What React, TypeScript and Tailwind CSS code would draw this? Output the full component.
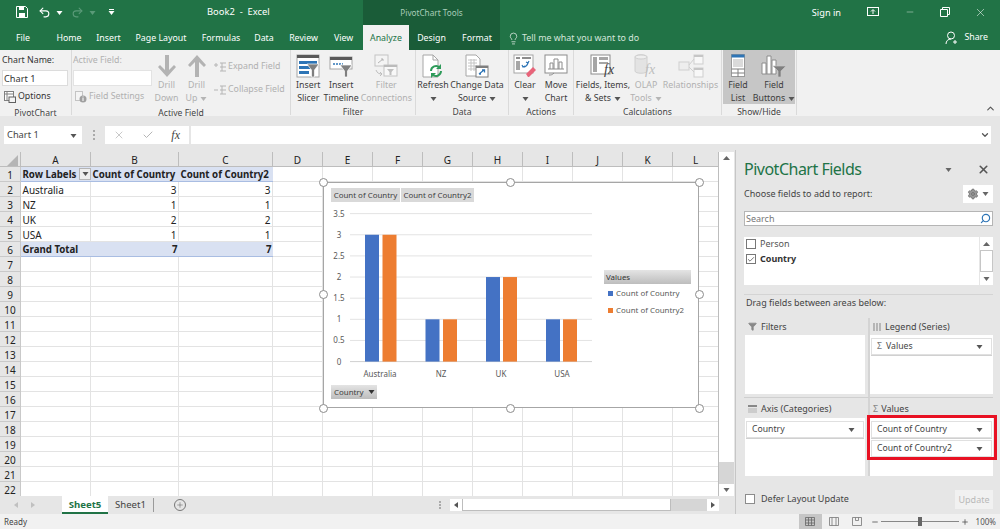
import React from "react";
import { Undo2, Redo2, X, Check, Lightbulb, ChevronUp, ChevronDown, Minus, Plus, Search, Settings, Filter } from "lucide-react";

const Caret = ({ c = "#555" }: { c?: string }) => (
  <svg width="7" height="4" viewBox="0 0 7 4" className="inline-block shrink-0"><path d="M0.5 0h6L3.5 4z" fill={c} /></svg>
);

const FxText = ({ x, y, c }: { x: number; y: number; c: string }) => (
  <text x={x} y={y} fontFamily="Liberation Serif, serif" fontStyle="italic" fontSize="14" fill={c}>fx</text>
);

const SlicerIcon = () => (
  <svg width="24" height="24" viewBox="0 0 24 24">
    <rect x="1" y="1" width="22" height="22" fill="#fff" stroke="#a6a6a6" />
    <rect x="1" y="1" width="22" height="3" fill="#595959" />
    <rect x="3" y="7" width="18" height="3" fill="#2e75b6" />
    <rect x="3" y="12" width="12" height="3" fill="#2e75b6" />
    <rect x="3" y="17" width="10" height="3" fill="#2e75b6" />
    <path d="M11 10h12l-4.5 6v7h-3v-7z" fill="#7f7f7f" stroke="#fff" strokeWidth=".7" />
  </svg>
);
const TimelineIcon = () => (
  <svg width="24" height="24" viewBox="0 0 24 24">
    <rect x="1" y="3" width="22" height="12" fill="#fff" stroke="#a6a6a6" />
    <rect x="1" y="3" width="22" height="3" fill="#595959" />
    <path d="M4 10h10" stroke="#2e75b6" strokeWidth="1.5" strokeDasharray="2 1" />
    <path d="M11 11h12l-4.5 6v6h-3v-6z" fill="#7f7f7f" stroke="#fff" strokeWidth=".7" />
  </svg>
);
const FilterConnIcon = () => (
  <svg width="24" height="24" viewBox="0 0 24 24">
    <rect x="1" y="1" width="13" height="11" fill="#f4f4f4" stroke="#c4c4c4" />
    <path d="M4 9l5-4M7 5h2v2" stroke="#b5b5b5" fill="none" />
    <rect x="10" y="11" width="13" height="11" fill="#f8f8f8" stroke="#c4c4c4" />
    <rect x="10" y="11" width="13" height="2" fill="#bbb" />
    <path d="M13 15h7l-2.5 3v3h-2v-3z" fill="#c0c0c0" />
    <path d="M2 16c1 3 3 4 6 4M6 18l2 2-2 2" stroke="#bdbdbd" fill="none" />
  </svg>
);
const RefreshIcon = () => (
  <svg width="26" height="24" viewBox="0 0 26 24">
    <path d="M3 1h10l5 5v17H3z" fill="#fff" stroke="#a6a6a6" />
    <path d="M13 1v5h5" fill="none" stroke="#a6a6a6" />
    <path d="M11 17a5 5 0 0 1 8.5-3.5M21 17a5 5 0 0 1-8.5 3.5" fill="none" stroke="#2e9b5a" strokeWidth="2" />
    <path d="M21 10v5h-5zM11 24v-5h5z" fill="#2e9b5a" />
  </svg>
);
const ChangeSourceIcon = () => (
  <svg width="26" height="24" viewBox="0 0 26 24">
    <path d="M2 1h10l4 4v17H2z" fill="#fff" stroke="#a6a6a6" />
    <path d="M4 6h9M4 9h9M4 12h9M4 15h9M7 5v12M10 5v12" stroke="#c4c4c4" />
    <rect x="12" y="12" width="12" height="11" fill="#fff" stroke="#7f7f7f" />
    <rect x="12" y="12" width="12" height="2" fill="#7f7f7f" />
    <path d="M15 20l5-4M18 16h2.500v2.500M15 20h2" stroke="#2e75b6" strokeWidth="1.300" fill="none" />
  </svg>
);
const ClearIcon = () => (
  <svg width="24" height="24" viewBox="0 0 24 24">
    <rect x="1" y="1" width="19" height="18" fill="#fff" stroke="#a6a6a6" />
    <rect x="3" y="3" width="4" height="2" fill="#8c8c8c" />
    <rect x="9" y="3" width="9" height="2" fill="#8c8c8c" />
    <rect x="3" y="7" width="4" height="9" fill="#a6a6a6" />
    <path d="M10 13c2 0 4-1 5-4M13 8l2 1 1-2M9 11l1 2 2-1" stroke="#2e75b6" strokeWidth="1.200" fill="none" />
    <path d="M13 20l7-7 3 3-7 7h-1z" fill="#e8647a" />
  </svg>
);
const MoveChartIcon = () => (
  <svg width="24" height="24" viewBox="0 0 24 24">
    <rect x="1" y="1" width="22" height="18" fill="#fff" stroke="#8c8c8c" />
    <path d="M6 15V9h3v6M10 15V5h4v10M15 15V8h3v7M4 15h16" fill="none" stroke="#8c8c8c" />
    <path d="M10 19c-2 2-3 2-5 2" stroke="#8c8c8c" fill="none" />
  </svg>
);
const FieldsIcon = () => (
  <svg width="26" height="24" viewBox="0 0 26 24" className="overflow-visible">
    <rect x="1" y="1" width="19" height="19" fill="#fff" stroke="#8c8c8c" />
    <rect x="3" y="3" width="4" height="15" fill="#a6a6a6" />
    <rect x="9" y="3" width="9" height="3" fill="#a6a6a6" />
    <rect x="9" y="8" width="9" height="2" fill="#a6a6a6" />
    <FxText x={14} y={20} c="#404040" />
  </svg>
);
const OlapIcon = () => (
  <svg width="24" height="24" viewBox="0 0 24 24" className="overflow-visible">
    <path d="M1 3c0-3 12-3 12 0v14c0 3-12 3-12 0z" fill="#e3e3e3" stroke="#d0d0d0" />
    <ellipse cx="7" cy="3" rx="6" ry="2" fill="#efefef" stroke="#cfcfcf" />
    <FxText x={11} y={20} c="#bdbdbd" />
  </svg>
);
const RelIcon = () => (
  <svg width="26" height="24" viewBox="0 0 26 24">
    <rect x="1" y="8" width="10" height="8" fill="#eee" stroke="#d0d0d0" />
    <rect x="16" y="1" width="9" height="9" fill="#f8f8f8" stroke="#cfcfcf" />
    <rect x="16" y="1" width="9" height="2" fill="#c6c6c6" />
    <rect x="16" y="14" width="9" height="9" fill="#f8f8f8" stroke="#cfcfcf" />
    <rect x="16" y="14" width="9" height="2" fill="#c6c6c6" />
    <path d="M11 11l5-6M11 13l5 5" stroke="#cfcfcf" />
  </svg>
);
const FieldListIcon = () => (
  <svg width="14" height="24" viewBox="0 0 14 24">
    <rect x=".5" y=".5" width="13" height="22" fill="#fff" stroke="#9a9a9a" />
    <rect x=".5" y=".5" width="13" height="3" fill="#2e75b6" />
    <path d="M2 6h10M2 8h10M2 10h10M2 12h10" stroke="#b5b5b5" />
    <path d="M.5 15h13M.5 19h13M7 15v8" stroke="#808080" />
  </svg>
);
const FieldButtonsIcon = () => (
  <svg width="26" height="24" viewBox="0 0 26 24">
    <path d="M1 20v-11h4v11M6 20V2h4v18M11 20V6h4v14" fill="#fff" stroke="#8c8c8c" />
    <path d="M1 20h14" stroke="#8c8c8c" />
    <path d="M12 12h13l-5 5v6h-3v-6z" fill="#7f7f7f" stroke="#c6c6c6" strokeWidth=".7" />
  </svg>
);
const DrillArrow = ({ up }: { up?: boolean }) => (
  <svg width="20" height="22" viewBox="0 0 20 22">
    <path d={up ? "M10 0L19 10l-2 2-5-5v15H8V7l-5 5-2-2z" : "M10 22L1 12l2-2 5 5V0h4v15l5-5 2 2z"} fill="#b3b3b3" />
  </svg>
);

const RBtn = ({ w, icon, l1, l2, caret, dim, bg }: { w: number; icon?: React.ReactNode; l1: string; l2?: string; caret?: boolean; dim?: boolean; bg?: boolean }) => (
  <div className={`flex flex-col items-center pt-[2px] h-[54px] whitespace-nowrap ${dim ? "text-[#b0b0b0]" : "text-[#3c3c3c]"} ${bg ? "bg-[#c6c6c6]" : ""}`} style={{ width: w }}>
    <div className="h-[27px] flex items-center justify-center shrink-0">{icon}</div>
    <div className="leading-[13px] h-[13px] shrink-0">{l1}</div>
    <div className="leading-[13px] h-[13px] flex items-center gap-[3px] shrink-0">{l2}{caret && <Caret c={dim ? "#b5b5b5" : "#555"} />}</div>
  </div>
);

const Group = ({ w, label, children }: { w: number; label: string; children: React.ReactNode }) => (
  <div className="flex flex-col border-r border-[#dadada] shrink-0 h-[65px]" style={{ width: w }}>
    <div className="flex h-[55px]">{children}</div>
    <div className="text-center text-[8.6px] leading-[11px] text-[#444] pt-[3px]">{label}</div>
  </div>
);

const tabs: [string, number][] = [["File", 46], ["Home", 46], ["Insert", 33], ["Page Layout", 72], ["Formulas", 48], ["Data", 38], ["Review", 41], ["View", 39]];

const cols = ["A", "B", "C", "D", "E", "F", "G", "H", "I", "J", "K", "L"];
const rowsData: Record<number, [string, string, string]> = {
  1: ["Row Labels", "Count of Country", "Count of Country2"],
  2: ["Australia", "3", "3"],
  3: ["NZ", "1", "1"],
  4: ["UK", "2", "2"],
  5: ["USA", "1", "1"],
  6: ["Grand Total", "7", "7"],
};

const Handle = ({ cls }: { cls: string }) => (
  <div className={`absolute w-[9px] h-[9px] rounded-full bg-white border-[1.5px] border-[#8c8c8c] ${cls}`} />
);

const bars = [
  { x: 365, o: 382.5, v: 3 },
  { x: 425.5, o: 443, v: 1 },
  { x: 486, o: 503, v: 2 },
  { x: 546, o: 563, v: 1 },
];
const yTicks = ["0", "0.5", "1", "1.5", "2", "2.5", "3", "3.5"];
const cats: [string, number][] = [["Australia", 380], ["NZ", 441], ["UK", 501], ["USA", 562]];

const PlotSvg = () => (
  <svg width="272" height="178" viewBox="325 205 272 178" className="shrink-0" fontFamily="Noto Sans, sans-serif">
    {yTicks.map((t, i) => {
      const y = 361.6 - i * 21.14;
      return (
        <g key={t}>
          <line x1="350" x2="592" y1={y} y2={y} stroke={i === 0 ? "#d0d0d0" : "#e3e3e3"} strokeWidth="1" />
          <text x="339" y={y + 3} fontSize="8" fill="#595959" textAnchor="middle">{t}</text>
        </g>
      );
    })}
    {bars.map((b) => (
      <g key={b.x}>
        <rect x={b.x} y={361.6 - b.v * 42.28} width="14" height={b.v * 42.28} fill="#4472c4" />
        <rect x={b.o} y={361.6 - b.v * 42.28} width="14" height={b.v * 42.28} fill="#ed7d31" />
      </g>
    ))}
    {cats.map(([c, x]) => (
      <text key={c} x={x} y="377" fontSize="8" fill="#595959" textAnchor="middle">{c}</text>
    ))}
  </svg>
);

const Chart = () => (
  <div className="absolute left-[323px] top-[30px] w-[376px] h-[226px] bg-white border-[1.5px] border-[#a6a6a6] text-[7.9px] text-[#404040]">
    <div className="pl-[7px] pt-[5px] flex gap-[1px] h-[22px]">
      <div className="h-[14px] w-[69px] bg-[#d9d9d9] leading-[14px] text-center whitespace-nowrap">Count of Country</div>
      <div className="h-[14px] w-[73px] bg-[#d9d9d9] leading-[14px] text-center whitespace-nowrap">Count of Country2</div>
    </div>
    <div className="flex pl-[1px]">
      <PlotSvg />
      <div className="ml-[7px] mt-[65px] w-[87px] shrink-0">
        <div className="h-[14px] bg-linear-to-b from-[#e4e4e4] to-[#bdbdbd] pl-[2px] leading-[14px] text-[#333]">Values</div>
        <div className="flex items-center h-[17px] mt-[1px] pl-[4px] gap-[3px] text-[#595959]"><span className="w-[5px] h-[5px] bg-[#4472c4]" />Count of Country</div>
        <div className="flex items-center h-[17px] pl-[4px] gap-[3px] text-[#595959]"><span className="w-[5px] h-[5px] bg-[#ed7d31]" />Count of Country2</div>
      </div>
    </div>
    <div className="ml-[7px] mt-[2px] w-[46px] h-[14px] bg-linear-to-b from-[#e4e4e4] to-[#bdbdbd] leading-[14px] pl-[3px] flex items-center gap-[4px]">Country<Caret c="#333" /></div>
    <Handle cls="-left-[5.5px] -top-[5.5px]" />
    <Handle cls="left-[182px] -top-[5.5px]" />
    <Handle cls="-right-[5.5px] -top-[5.5px]" />
    <Handle cls="-left-[5.5px] top-[107px]" />
    <Handle cls="-right-[5.5px] top-[107px]" />
    <Handle cls="-left-[5.5px] -bottom-[5.5px]" />
    <Handle cls="left-[182px] -bottom-[5.5px]" />
    <Handle cls="-right-[5.5px] -bottom-[5.5px]" />
  </div>
);

const Sheet = () => (
  <div className="relative h-[344px] overflow-hidden w-[719px] bg-white border-r border-[#bdbdbd]">
    <div className="grid grid-cols-[21px_70px_88px_94px_50px_50px_50px_50px_50px_50px_50px_50px_46px] auto-rows-[15px] text-[10px] leading-[16px] text-[#222]">
      <div className="bg-[#e6e6e6] border-r border-b border-[#bdbdbd] relative">
        <svg width="12" height="11" viewBox="0 0 12 11" className="absolute left-[7px] top-[3px]"><path d="M11 0v11H0z" fill="#b5b5b5" /></svg>
      </div>
      {cols.map((c) => (
        <div key={c} className="bg-[#e6e6e6] border-r border-b border-[#bdbdbd] text-center">{c}</div>
      ))}
      {Array.from({ length: 22 }, (_, i) => i + 1).map((r) => {
        const d = rowsData[r];
        const head = r === 1 || r === 6;
        return (
          <React.Fragment key={r}>
            <div className="bg-[#e6e6e6] border-r border-b border-[#c9c9c9] text-center">{r}</div>
            {cols.map((c, ci) => {
              const inTable = ci < 3 && d;
              return (
                <div
                  key={c}
                  className={`relative px-[1.5px] whitespace-nowrap ${inTable && head ? "bg-[#d9e1f2] font-bold text-[9.7px] border-b border-[#a9bde2]" : "border-r border-b border-[#e3e3e3]"} ${inTable && ci > 0 && r !== 1 ? "text-right" : ""}`}
                >
                  {inTable ? d[ci] : ""}
                  {r === 1 && ci === 0 && (
                    <span className="absolute right-0 top-[1px] w-[12px] h-[12px] bg-[#eeeeee] border border-[#b5b5b5] flex items-center justify-center"><Caret /></span>
                  )}
                </div>
              );
            })}
          </React.Fragment>
        );
      })}
    </div>
    <Chart />
  </div>
);

const VScroll = () => (
  <div className="w-[15px] h-[344px] bg-[#d6d6d6] flex flex-col justify-between">
    <div className="h-[310px] bg-white flex justify-center pt-[4px]"><svg width="7" height="4" viewBox="0 0 7 4"><path d="M0 4h7L3.500 0z" fill="#666" /></svg></div>
    <div className="h-[12px] bg-white flex items-center justify-center"><Caret c="#666" /></div>
  </div>
);

const TabBar = () => (
  <div className="h-[18px] flex items-center text-[9.6px] relative">
    <div className="w-[62px] flex items-center pl-[14px] gap-[13px] text-[#c0c0c0]">
      <svg width="4" height="6" viewBox="0 0 4 6"><path d="M4 0v6L0 3z" fill="#c0c0c0" /></svg>
      <svg width="4" height="6" viewBox="0 0 4 6"><path d="M0 0v6l4-3z" fill="#c0c0c0" /></svg>
    </div>
    <div className="w-[46px] h-[18px] bg-white border-b-2 border-[#217346] text-[#217346] font-bold text-center leading-[17px]">Sheet5</div>
    <div className="w-[46px] h-[14px] text-center text-[#444] leading-[14px] border-r border-[#9a9a9a]">Sheet1</div>
    <div className="ml-[20px] w-[12px] h-[12px] rounded-full border border-[#777] flex items-center justify-center"><Plus size={8} color="#555" strokeWidth={1.5} /></div>
    <div className="ml-[253px] w-[2px] h-[8px] border-l-2 border-dotted border-[#aaa]" />
    <div className="ml-[9px] flex items-center h-[12px] w-[269px] bg-[#d6d6d6]">
      <div className="w-[12px] h-[12px] bg-white flex items-center justify-center"><svg width="4" height="6" viewBox="0 0 4 6"><path d="M4 0v6L0 3z" fill="#555" /></svg></div>
      <div className="w-[209px] h-[12px] bg-white border-x border-b border-[#bdbdbd]" />
      <div className="ml-auto w-[12px] h-[12px] bg-white flex items-center justify-center"><svg width="4" height="6" viewBox="0 0 4 6"><path d="M0 0v6l4-3z" fill="#555" /></svg></div>
    </div>
  </div>
);

const Item = ({ label, sigma, mt = 2 }: { label: string; sigma?: boolean; mt?: number }) => (
  <div className="mx-[1px] h-[17px] bg-white border border-[#e0e0e0] shadow-[0_1px_0_#d0d0d0] flex items-center pl-[5px] pr-[8px] text-[8.7px] text-[#444]" style={{ marginTop: mt }}>
    {sigma && <span className="mr-[4px] text-[#777] leading-none">Σ</span>}
    <span>{label}</span>
    <span className="ml-auto"><Caret /></span>
  </div>
);

const Pane = () => (
  <div className="w-[265px] h-[364px] border-l border-[#c6c6c6] relative text-[#444] text-[9px] shrink-0 pl-[8px] pr-[7px]">
    <div className="h-[33px] flex items-center pt-[5px]">
      <span className="text-[16px] leading-none text-[#217346] tracking-[-0.5px] whitespace-nowrap">PivotChart Fields</span>
      <span className="ml-auto mr-[25px]"><Caret c="#666" /></span>
      <X size={13} color="#555" strokeWidth={3} className="mr-[3px]" />
    </div>
    <div className="flex items-center h-[18px] mt-[2px]">
      <span>Choose fields to add to report:</span>
      <div className="ml-auto w-[30px] h-[18px] bg-white flex items-center justify-center gap-[3px]"><Settings size={12} color="#777" fill="#999" /><Caret c="#666" /></div>
    </div>
    <div className="mt-[8px] h-[15px] bg-white border border-[#b5b5b5] flex items-center px-[1px] text-[#777] justify-between">
      <span>Search</span><Search size={11} color="#2e75b6" strokeWidth={2.5} className="-scale-x-100" />
    </div>
    <div className="mt-[11px] h-[48px] bg-white flex">
      <div className="flex-1 pl-[2px]">
        <div className="flex items-center gap-[4px] h-[13px]"><span className="w-[10px] h-[10px] border border-[#777] bg-white" /><span className="text-[#555]">Person</span></div>
        <div className="flex items-center gap-[4px] h-[16px] mt-[1px] font-bold text-[#333]"><span className="w-[10px] h-[10px] border border-[#777] flex items-center justify-center"><Check size={9} color="#333" strokeWidth={2} /></span>Country</div>
      </div>
      <div className="w-[14px] border-l border-[#e6e6e6] flex flex-col items-center">
        <div className="h-[13px] flex items-center"><svg width="7" height="4" viewBox="0 0 7 4"><path d="M0 4h7L3.500 0z" fill="#666" /></svg></div>
        <div className="flex-1 w-full border border-[#c6c6c6]" />
        <div className="h-[13px] flex items-center"><Caret c="#666" /></div>
      </div>
    </div>
    <div className="mt-[9px] border-t border-[#d4d4d4] h-[16px] pl-[2px] leading-[16px]">Drag fields between areas below:</div>
    <div className="mt-[8px] grid grid-cols-[126px_123px] grid-rows-[80px_78px] h-[158px] relative">
      <div className="pr-[3px] border-r-2 border-[#d4d4d4] pb-[3px] border-b border-b-[#cfcfcf] flex flex-col">
        <div className="h-[17px] shrink-0 flex items-center gap-[4px] pl-[4px]"><Filter size={9} color="#888" fill="#888" />Filters</div>
        <div className="flex-1 bg-white ml-[1px]" />
      </div>
      <div className="pb-[3px] border-b border-[#cfcfcf] flex flex-col">
        <div className="h-[17px] shrink-0 flex items-center gap-[4px] pl-[3px]"><svg width="8" height="8" viewBox="0 0 8 8"><path d="M1 0v8M4 0v8M7 0v8" stroke="#aaa" strokeWidth="1.600" /></svg>Legend (Series)</div>
        <div className="flex-1 bg-white"><Item label="Values" sigma mt={3} /></div>
      </div>
      <div className="pr-[3px] border-r-2 border-[#d4d4d4] flex flex-col">
        <div className="h-[20px] shrink-0 flex items-center gap-[4px] pl-[4px] pt-[1px]"><svg width="9" height="8" viewBox="0 0 9 8"><path d="M0 0h9v2H0z" fill="#888" /><path d="M0 3h9v5H0z" fill="#ccc" /></svg>Axis (Categories)</div>
        <div className="flex-1 bg-white ml-[1px]"><Item label="Country" mt={3} /></div>
      </div>
      <div className="flex flex-col">
        <div className="h-[20px] shrink-0 flex items-center gap-[3px] pl-[3px] pt-[1px]"><span className="text-[#888]">Σ</span>Values</div>
        <div className="flex-1 bg-white"><Item label="Count of Country" mt={3} /><Item label="Count of Country2" /></div>
      </div>
    </div>
    <div className="flex items-center mt-[13px] h-[20px]">
      <span className="w-[10px] h-[10px] border border-[#8c8c8c] bg-white ml-[1px] mr-[6px]" />
      <span>Defer Layout Update</span>
      <div className="ml-auto w-[38px] h-[19px] bg-[#f1f1f1] text-[#b9b9b9] text-center leading-[19px]">Update</div>
    </div>
    <div className="absolute left-[131px] top-[265px] w-[130px] h-[45px] border-[3px] border-[#e81123]" />
  </div>
);

export default function App() {
  return (
    <div className="w-[1000px] h-[529px] overflow-hidden flex flex-col bg-[#e6e6e6] font-['Noto_Sans',sans-serif] text-[8.8px]">
      {/* title bar */}
      <div className="h-[25px] bg-[#217346] flex items-center text-white relative shrink-0">
        <div className="flex items-center pl-[16px] w-[363px]">
          <svg width="12" height="12" viewBox="0 0 12 12" className="mr-[10px]"><path d="M.5.5h9l2 2v9H.5z" fill="none" stroke="#fff" /><rect x="3" y="1" width="5" height="3" fill="#fff" /><rect x="3" y="7" width="6" height="4" fill="#fff" /></svg>
          <Undo2 size={13} strokeWidth={2} color="#fff" />
          <span className="ml-[5px] mr-[8px]"><Caret c="#fff" /></span>
          <Redo2 size={13} color="#5a9a78" strokeWidth={2} />
          <span className="ml-[5px] mr-[12px]"><Caret c="#5a9a78" /></span>
          <span className="flex flex-col items-center gap-[1px]"><span className="w-[5px] h-[1px] bg-white" /><Caret c="#fff" /></span>
          <span className="ml-[92px] text-[9.4px] whitespace-nowrap">Book2&nbsp; -&nbsp; Excel</span>
        </div>
        <div className="w-[137px] h-full bg-[#1a5c38] text-center leading-[25px] text-[#a9cdb8] text-[8.2px]">PivotChart Tools</div>
        <div className="ml-auto flex items-center pr-[13px]">
          <span className="text-[9.2px] mr-[26px]">Sign in</span>
          <svg width="12" height="10" viewBox="0 0 12 10" className="mr-[26px]"><rect x=".5" y=".5" width="11" height="8" fill="none" stroke="#fff" /><path d="M6 7V3M4 4.500l2-2 2 2" stroke="#fff" fill="none" /></svg>
          <Minus size={10} strokeWidth={1} className="mr-[25px]" />
          <svg width="10" height="10" viewBox="0 0 10 10" className="mr-[24px]"><path d="M.5 2.500h7v7h-7zM2.500 2.500v-2h7v7h-2" fill="none" stroke="#fff" /></svg>
          <X size={13} strokeWidth={1} />
        </div>
      </div>
      {/* tabs */}
      <div className="h-[25px] bg-[#217346] flex items-stretch text-white text-[8.8px] shrink-0 relative">
        {tabs.map(([t, w]) => (
          <div key={t} className="text-center leading-[26px] whitespace-nowrap" style={{ width: w }}>{t}</div>
        ))}
        <div className="w-[46px] bg-[#f1f1f1] text-[#217346] text-center leading-[26px]">Analyze</div>
        <div className="w-[45px] bg-[#1a5c38] text-center leading-[26px]">Design</div>
        <div className="w-[46px] bg-[#1a5c38] text-center leading-[26px]">Format</div>
        <div className="flex items-center ml-[7px] text-[#d5e6dc] text-[8.9px] gap-[2px] pt-[1px]"><Lightbulb size={13} strokeWidth={1.2} color="#fff" />Tell me what you want to do</div>
        <div className="ml-auto flex items-center pr-[12px] gap-[5px]">
          <svg width="14" height="14" viewBox="0 0 14 14"><circle cx="6" cy="4.500" r="3.500" fill="none" stroke="#fff" /><path d="M1 13c0-3 2-5 5-5M10 9v4M8 11h4" fill="none" stroke="#fff" /></svg>
          <span>Share</span>
        </div>
      </div>
      {/* ribbon */}
      <div className="h-[66px] bg-[#f1f1f1] flex shrink-0 relative">
        <Group w={72} label="PivotChart">
          <div className="pl-[2px] pt-[3px] text-[#333]">
            <div className="h-[15px] leading-[15px]">Chart Name:</div>
            <div className="mt-[2px] w-[66px] h-[16px] bg-white border border-[#dcdcdc] leading-[15px] pl-[1px] text-[9.2px]">Chart 1</div>
            <div className="flex items-center mt-[3px] h-[16px] pl-[2px] gap-[2px]">
              <svg width="12" height="12" viewBox="0 0 12 12"><rect x=".5" y=".5" width="9" height="9" fill="#fff" stroke="#808080" /><path d="M.5 3h9M3 .5v9" stroke="#808080" /><rect x="5" y="6" width="6.500" height="5.500" fill="#f4f4f4" stroke="#606060" /></svg>
              Options
            </div>
          </div>
        </Group>
        <Group w={219} label="Active Field">
          <div className="w-[80px] pl-[1px] pt-[3px] text-[#b0b0b0] shrink-0">
            <div className="h-[15px] leading-[15px]">Active Field:</div>
            <div className="mt-[2px] w-[79px] h-[16px] bg-white border border-[#e3e3e3]" />
            <div className="flex items-center mt-[3px] h-[16px] pl-[2px] gap-[2px] whitespace-nowrap">
              <svg width="12" height="12" viewBox="0 0 12 12"><rect x=".5" y=".5" width="7" height="9" fill="#f4f4f4" stroke="#c4c4c4" /><circle cx="8" cy="8" r="3.500" fill="#a0a0a0" /><path d="M8 7v3M8 5.500v1" stroke="#fff" /></svg>
              Field Settings
            </div>
          </div>
          <RBtn w={29} icon={<DrillArrow />} l1="Drill" l2="Down" dim />
          <RBtn w={31} icon={<DrillArrow up />} l1="Drill" l2="Up" caret dim />
          <div className="pl-[2px] text-[#b0b0b0] whitespace-nowrap">
            <div className="flex items-center h-[16px] mt-[9px] gap-[2px]">
              <svg width="12" height="10" viewBox="0 0 12 10"><path d="M0 3h4M2 1v4M6 1h6M6 5h6M6 9h6M8 1v8" stroke="#b5b5b5" fill="none" /></svg>Expand Field
            </div>
            <div className="flex items-center h-[16px] mt-[7px] gap-[2px]">
              <svg width="12" height="10" viewBox="0 0 12 10"><path d="M0 5h4M6 1h6M6 5h6M6 9h6M8 1v8" stroke="#b5b5b5" fill="none" /></svg>Collapse Field
            </div>
          </div>
        </Group>
        <Group w={125} label="Filter">
          <div className="w-[1px]" />
          <RBtn w={33} icon={<SlicerIcon />} l1="Insert" l2="Slicer" />
          <RBtn w={33} icon={<TimelineIcon />} l1="Insert" l2="Timeline" />
          <RBtn w={58} icon={<FilterConnIcon />} l1="Filter" l2="Connections" dim />
        </Group>
        <Group w={93} label="Data">
          <RBtn w={34} icon={<RefreshIcon />} l1="Refresh" caret />
          <RBtn w={54} icon={<ChangeSourceIcon />} l1="Change Data" l2="Source" caret />
        </Group>
        <Group w={65} label="Actions">
          <RBtn w={32} icon={<ClearIcon />} l1="Clear" caret />
          <RBtn w={30} icon={<MoveChartIcon />} l1="Move" l2="Chart" />
        </Group>
        <Group w={148} label="Calculations">
          <RBtn w={58} icon={<FieldsIcon />} l1="Fields, Items," l2="& Sets" caret />
          <RBtn w={28} icon={<OlapIcon />} l1="OLAP" l2="Tools" caret dim />
          <RBtn w={61} icon={<RelIcon />} l1="Relationships" dim />
        </Group>
        <Group w={75} label="Show/Hide">
          <div className="w-[1px]" />
          <RBtn w={30} icon={<FieldListIcon />} l1="Field" l2="List" bg />
          <RBtn w={42} icon={<FieldButtonsIcon />} l1="Field" l2="Buttons" caret bg />
        </Group>
        <ChevronUp size={11} color="#555" strokeWidth={2.5} className="absolute right-[4px] bottom-[2px]" />
      </div>
      {/* formula bar */}
      <div className="h-[34px] pt-[10px] flex shrink-0 text-[#444]">
        <div className="ml-[4px] w-[78px] h-[18px] bg-white flex items-center pl-[3px] pr-[5px] text-[9.3px]">Chart 1<span className="ml-auto"><Caret /></span></div>
        <div className="ml-[11px] w-[2px] h-[10px] mt-[4px] border-l-2 border-dotted border-[#aaa]" />
        <div className="ml-[10px] w-[84px] h-[18px] bg-white flex items-center justify-between pl-[8px] pr-[9px]">
          <X size={12} color="#b5b5b5" strokeWidth={1.5} />
          <Check size={12} color="#b5b5b5" strokeWidth={2} />
          <span className="font-['Liberation_Serif',serif] italic text-[12px]">fx</span>
        </div>
        <div className="ml-[2px] w-[800px] h-[18px] bg-white flex items-center justify-end pr-[1px]"><ChevronDown size={10} color="#555" strokeWidth={3} /></div>
      </div>
      {/* main */}
      <div className="flex h-[364px] shrink-0">
        <div className="w-[735px] pt-[2px] shrink-0">
          <div className="flex">
            <Sheet />
            <VScroll />
          </div>
          <TabBar />
        </div>
        <Pane />
      </div>
      {/* status */}
      <div className="h-[15px] bg-[#f1f1f1] flex items-center pl-[4px] text-[8px] text-[#444] shrink-0">
        <span>Ready</span>
        <div className="ml-auto flex items-center h-full text-[#555] pr-[4px]">
          <div className="w-[23px] h-full bg-[#c6c6c6] flex items-center justify-center">
            <svg width="10" height="9" viewBox="0 0 10 9"><path d="M.5.5h9v8h-9zM.5 3h9M.5 6h9M3.500.5v8M6.500.5v8" fill="none" stroke="#666" strokeWidth=".8" /></svg>
          </div>
          <div className="w-[24px] flex justify-center"><svg width="10" height="9" viewBox="0 0 10 9"><path d="M.5.5h9v8h-9zM3 .5v8M7 .5v8" fill="none" stroke="#777" strokeWidth=".8" /></svg></div>
          <div className="w-[23px] flex justify-center"><svg width="10" height="9" viewBox="0 0 10 9"><path d="M.5.5h9v8h-9zM3.500.5v3h3v-3" fill="none" stroke="#777" strokeWidth=".8" /></svg></div>
          <Minus size={8} strokeWidth={2.5} className="ml-[2px]" />
          <div className="w-[78px] h-[1px] bg-[#888] mx-[2px] relative"><span className="absolute left-[37px] -top-[4px] w-[4px] h-[9px] bg-[#666]" /></div>
          <Plus size={8} strokeWidth={2.5} />
          <span className="ml-[7px]">100%</span>
        </div>
      </div>
    </div>
  );
}
